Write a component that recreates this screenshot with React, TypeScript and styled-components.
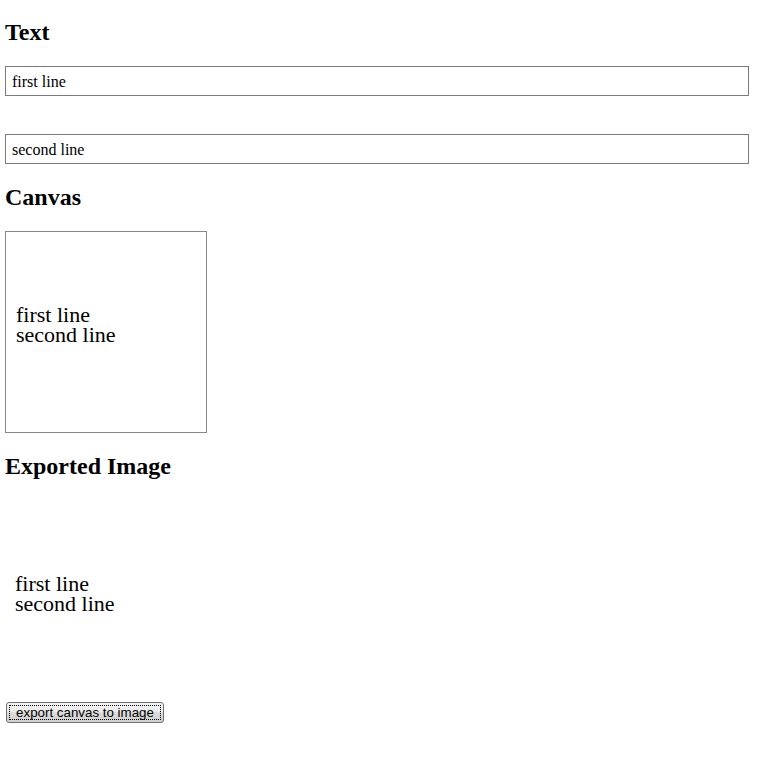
import React from "react";
import styled, { createGlobalStyle } from "styled-components";

const Global = createGlobalStyle`
  html, body { margin: 0; padding: 0; background: #fff; }
  body { font-family: "Liberation Serif", "Times New Roman", serif; color: #000; }
`;

const Page = styled.div`
  display: flex;
  flex-direction: column;
  align-items: flex-start;
  padding: 18px 8px 30px 5px;
`;

const Heading = styled.h2<{ $gap?: number }>`
  margin: ${(p) => p.$gap ?? 0}px 0 0 0;
  font-family: "Liberation Serif", "Times New Roman", serif;
  font-size: 24px;
  font-weight: bold;
  line-height: 28px;
`;

const TextInput = styled.input<{ $gap: number }>`
  box-sizing: border-box;
  margin-top: ${(p) => p.$gap}px;
  width: 100%;
  height: 30px;
  border: 1px solid #7a7a7a;
  padding: 1px 6px 0 6px;
  font-family: "Liberation Serif", "Times New Roman", serif;
  font-size: 16px;
  color: #000;
  background: #fff;
  outline: none;
`;

const Surface = styled.div<{ $bordered?: boolean; $pad: number }>`
  box-sizing: content-box;
  margin-top: 20px;
  width: 200px;
  height: 200px;
  border: ${(p) => (p.$bordered ? "1px solid #888" : "none")};
  padding-top: ${(p) => p.$pad}px;
  display: flex;
  flex-direction: column;
`;

const SurfaceText = styled.div`
  padding: 73px 0 0 10px;
  font-family: "Liberation Serif", Georgia, serif;
  font-size: 22px;
  line-height: 20px;
  white-space: pre;
`;

const ExportButton = styled.button`
  margin: 1px 0 0 1px;
  box-sizing: border-box;
  width: 158px;
  height: 21px;
  padding: 2px;
  border: 1px solid #707070;
  border-radius: 3px;
  background: linear-gradient(#f2f2f2 0%, #ebebeb 50%, #dddddd 50%, #cfcfcf 100%);
  display: flex;
  cursor: default;
`;

const FocusRing = styled.span`
  flex: 1;
  border: 1px dotted #000;
  display: flex;
  align-items: center;
  justify-content: center;
  font-family: "Liberation Sans", Arial, sans-serif;
  font-size: 13.33px;
  line-height: 13px;
  color: #000;
`;

export default function App() {
  const lines = ["first line", "second line"];
  return (
    <>
      <Global />
      <Page>
        <Heading>Text</Heading>
        <TextInput $gap={20} defaultValue={lines[0]} />
        <TextInput $gap={38} defaultValue={lines[1]} />
        <Heading $gap={19}>Canvas</Heading>
        <Surface $bordered $pad={0}>
          <SurfaceText>{lines.join("\n")}</SurfaceText>
        </Surface>
        <Heading $gap={19}>Exported Image</Heading>
        <Surface $pad={1}>
          <SurfaceText>{lines.join("\n")}</SurfaceText>
        </Surface>
        <ExportButton>
          <FocusRing>export canvas to image</FocusRing>
        </ExportButton>
      </Page>
    </>
  );
}
